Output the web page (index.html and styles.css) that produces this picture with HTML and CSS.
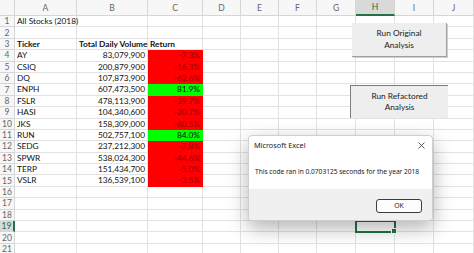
FILE: index.html
```html
<!DOCTYPE html>
<html lang="en">
<head>
    <meta charset="UTF-8">
    <title>All Stocks (2018)</title>
    <link rel="stylesheet" href="styles.css">
</head>
<body>
<div class="workbook">
    <div class="sheet">
        <div class="corner"></div>
        <div class="colhead">A</div><div class="colhead">B</div><div class="colhead">C</div><div class="colhead">D</div><div class="colhead">E</div>
        <div class="colhead">F</div><div class="colhead">G</div><div class="colhead active">H</div><div class="colhead">I</div><div class="colhead">J</div>

        <div class="rowhead">1</div><div class="cell">All Stocks (2018)</div><div class="cell"></div><div class="cell"></div><div class="cell"></div><div class="cell"></div><div class="cell"></div><div class="cell"></div><div class="cell"></div><div class="cell"></div><div class="cell"></div>
        <div class="rowhead">2</div><div class="cell"></div><div class="cell"></div><div class="cell"></div><div class="cell"></div><div class="cell"></div><div class="cell"></div><div class="cell"></div><div class="cell"></div><div class="cell"></div><div class="cell"></div>
        <div class="rowhead">3</div><div class="cell bold">Ticker</div><div class="cell bold">Total Daily Volume</div><div class="cell bold">Return</div><div class="cell"></div><div class="cell"></div><div class="cell"></div><div class="cell"></div><div class="cell"></div><div class="cell"></div><div class="cell"></div>

        <div class="rowhead">4</div><div class="cell">AY</div><div class="cell num">83,079,900</div><div class="cell num neg">-7.3%</div><div class="cell"></div><div class="cell"></div><div class="cell"></div><div class="cell"></div><div class="cell"></div><div class="cell"></div><div class="cell"></div>
        <div class="rowhead">5</div><div class="cell">CSIQ</div><div class="cell num">200,879,900</div><div class="cell num neg">-16.3%</div><div class="cell"></div><div class="cell"></div><div class="cell"></div><div class="cell"></div><div class="cell"></div><div class="cell"></div><div class="cell"></div>
        <div class="rowhead">6</div><div class="cell">DQ</div><div class="cell num">107,873,900</div><div class="cell num neg">-62.6%</div><div class="cell"></div><div class="cell"></div><div class="cell"></div><div class="cell"></div><div class="cell"></div><div class="cell"></div><div class="cell"></div>
        <div class="rowhead">7</div><div class="cell">ENPH</div><div class="cell num">607,473,500</div><div class="cell num pos">81.9%</div><div class="cell"></div><div class="cell"></div><div class="cell"></div><div class="cell"></div><div class="cell"></div><div class="cell"></div><div class="cell"></div>
        <div class="rowhead">8</div><div class="cell">FSLR</div><div class="cell num">478,113,900</div><div class="cell num neg">-39.7%</div><div class="cell"></div><div class="cell"></div><div class="cell"></div><div class="cell"></div><div class="cell"></div><div class="cell"></div><div class="cell"></div>
        <div class="rowhead">9</div><div class="cell">HASI</div><div class="cell num">104,340,600</div><div class="cell num neg">-20.7%</div><div class="cell"></div><div class="cell"></div><div class="cell"></div><div class="cell"></div><div class="cell"></div><div class="cell"></div><div class="cell"></div>
        <div class="rowhead">10</div><div class="cell">JKS</div><div class="cell num">158,309,000</div><div class="cell num neg">-60.5%</div><div class="cell"></div><div class="cell"></div><div class="cell"></div><div class="cell"></div><div class="cell"></div><div class="cell"></div><div class="cell"></div>
        <div class="rowhead">11</div><div class="cell">RUN</div><div class="cell num">502,757,100</div><div class="cell num pos">84.0%</div><div class="cell"></div><div class="cell"></div><div class="cell"></div><div class="cell"></div><div class="cell"></div><div class="cell"></div><div class="cell"></div>
        <div class="rowhead">12</div><div class="cell">SEDG</div><div class="cell num">237,212,300</div><div class="cell num neg">-7.8%</div><div class="cell"></div><div class="cell"></div><div class="cell"></div><div class="cell"></div><div class="cell"></div><div class="cell"></div><div class="cell"></div>
        <div class="rowhead">13</div><div class="cell">SPWR</div><div class="cell num">538,024,300</div><div class="cell num neg">-44.6%</div><div class="cell"></div><div class="cell"></div><div class="cell"></div><div class="cell"></div><div class="cell"></div><div class="cell"></div><div class="cell"></div>
        <div class="rowhead">14</div><div class="cell">TERP</div><div class="cell num">151,434,700</div><div class="cell num neg">-5.0%</div><div class="cell"></div><div class="cell"></div><div class="cell"></div><div class="cell"></div><div class="cell"></div><div class="cell"></div><div class="cell"></div>
        <div class="rowhead">15</div><div class="cell">VSLR</div><div class="cell num">136,539,100</div><div class="cell num neg">-3.5%</div><div class="cell"></div><div class="cell"></div><div class="cell"></div><div class="cell"></div><div class="cell"></div><div class="cell"></div><div class="cell"></div>

        <div class="rowhead">16</div><div class="cell"></div><div class="cell"></div><div class="cell"></div><div class="cell"></div><div class="cell"></div><div class="cell"></div><div class="cell"></div><div class="cell"></div><div class="cell"></div><div class="cell"></div>
        <div class="rowhead">17</div><div class="cell"></div><div class="cell"></div><div class="cell"></div><div class="cell"></div><div class="cell"></div><div class="cell"></div><div class="cell"></div><div class="cell"></div><div class="cell"></div><div class="cell"></div>
        <div class="rowhead">18</div><div class="cell"></div><div class="cell"></div><div class="cell"></div><div class="cell"></div><div class="cell"></div><div class="cell"></div><div class="cell"></div><div class="cell"></div><div class="cell"></div><div class="cell"></div>
        <div class="rowhead active">19</div><div class="cell"></div><div class="cell"></div><div class="cell"></div><div class="cell"></div><div class="cell"></div><div class="cell"></div><div class="cell"></div><div class="cell selected"></div><div class="cell"></div><div class="cell"></div>
        <div class="rowhead">20</div><div class="cell"></div><div class="cell"></div><div class="cell"></div><div class="cell"></div><div class="cell"></div><div class="cell"></div><div class="cell"></div><div class="cell"></div><div class="cell"></div><div class="cell"></div>
        <div class="rowhead">21</div><div class="cell"></div><div class="cell"></div><div class="cell"></div><div class="cell"></div><div class="cell"></div><div class="cell"></div><div class="cell"></div><div class="cell"></div><div class="cell"></div><div class="cell"></div>
    </div>

    <!-- macro buttons drawn on the sheet -->
    <div class="macro macro-original">Run Original<br>Analysis</div>
    <div class="macro macro-refactored">Run Refactored<br>Analysis</div>

    <div class="dialog">
        <div class="dialog-title">
            <span>Microsoft Excel</span>
            <svg class="close" width="7" height="7" viewBox="0 0 7 7">
                <path d="M0.5 0.5 L6.5 6.5 M6.5 0.5 L0.5 6.5" stroke="#333" stroke-width="0.8" fill="none"/>
            </svg>
        </div>
        <div class="dialog-body">This code ran in 0.0703125 seconds for the year 2018</div>
        <div class="dialog-foot">
            <button class="ok">OK</button>
        </div>
    </div>
</div>
</body>
</html>
```

FILE: styles.css
```css
body {
    margin: 0;
    background-color: #fff;
    overflow: hidden;
}
.workbook {
    position: relative;
    width: 474px;
    height: 253px;
    overflow: hidden;
}
.sheet {
    display: grid;
    grid-template-columns: 15px 62px 71px 55px 38px 38px 38px 39px 39px 39px 40px;
    grid-template-rows: 16px;
    grid-auto-rows: 11.4px;
    font-family: Lato, "Liberation Sans", sans-serif;
    font-size: 8.3px;
    color: #111;
}
.corner, .colhead, .rowhead {
    background-color: #f7f7f7;
    color: #666;
    box-sizing: border-box;
    border-right: 1px solid #d6d6d6;
    border-bottom: 1px solid #d6d6d6;
    display: flex;
    align-items: center;
    justify-content: center;
}
.colhead {
    font-size: 8.5px;
}
.rowhead {
    font-size: 8.5px;
}
.colhead.active {
    background-color: #d9d9d9;
    color: #1d6b40;
    border-bottom: 2px solid #217346;
}
.rowhead.active {
    background-color: #d9d9d9;
    color: #1d6b40;
    border-right: 2px solid #217346;
}
.cell {
    box-sizing: border-box;
    border-right: 1px solid #e2e2e2;
    border-bottom: 1px solid #e2e2e2;
    padding: 0 2px;
    line-height: 10.4px;
    white-space: nowrap;
    overflow: visible;
}
.bold {
    font-weight: bold;
}
.num {
    text-align: right;
}
.neg {
    background-color: #ff0000;
    border-color: #ff0000;
    color: #9c0006;
}
.pos {
    background-color: #00ff00;
    border-color: #00ff00;
    color: #111;
}
.selected {
    position: relative;
    outline: 2px solid #217346;
    outline-offset: -1px;
}
.selected::after {
    content: "";
    position: absolute;
    right: -3px;
    bottom: -3px;
    width: 4px;
    height: 4px;
    background-color: #217346;
    border: 1px solid #fff;
}
.macro {
    position: absolute;
    box-sizing: border-box;
    background-color: #eeeeee;
    display: flex;
    align-items: center;
    justify-content: center;
    text-align: center;
    font-family: Lato, "Liberation Sans", sans-serif;
    font-size: 8.3px;
    line-height: 11.4px;
    color: #222;
}
.macro-original {
    left: 352px;
    top: 23px;
    width: 95px;
    height: 34px;
    border-right: 1px solid #a0a0a0;
    border-bottom: 1px solid #a0a0a0;
    box-shadow: 1px 1px 0 #cfcfcf;
}
.macro-refactored {
    left: 350px;
    top: 85px;
    width: 98px;
    height: 33px;
    border-top: 1px solid #7c7c7c;
    border-left: 1px solid #7c7c7c;
}
.dialog {
    position: absolute;
    left: 248px;
    top: 135px;
    width: 185px;
    height: 86px;
    box-sizing: border-box;
    background-color: #fff;
    border: 1px solid #cfcfcf;
    border-radius: 4px;
    box-shadow: 0 7px 20px rgba(0, 0, 0, 0.3);
    display: flex;
    flex-direction: column;
    overflow: hidden;
    font-family: "Noto Sans", "Open Sans", sans-serif;
    color: #1a1a1a;
}
.dialog-title {
    height: 18px;
    display: flex;
    align-items: center;
    justify-content: space-between;
    padding: 0 7px 0 5px;
    font-size: 7.3px;
}
.dialog-body {
    flex: 1;
    display: flex;
    align-items: center;
    padding-left: 6px;
    font-size: 6.6px;
}
.dialog-foot {
    height: 31px;
    background-color: #f0f0f0;
    display: flex;
    justify-content: flex-end;
    align-items: center;
    padding: 2px 10px 0 0;
    box-sizing: border-box;
}
.ok {
    width: 46px;
    height: 14px;
    padding: 0;
    background-color: #fdfdfd;
    border: 1.5px solid #3c3c3c;
    border-radius: 3px;
    font-family: "Noto Sans", "Open Sans", sans-serif;
    font-size: 6.8px;
    color: #1a1a1a;
}
```
